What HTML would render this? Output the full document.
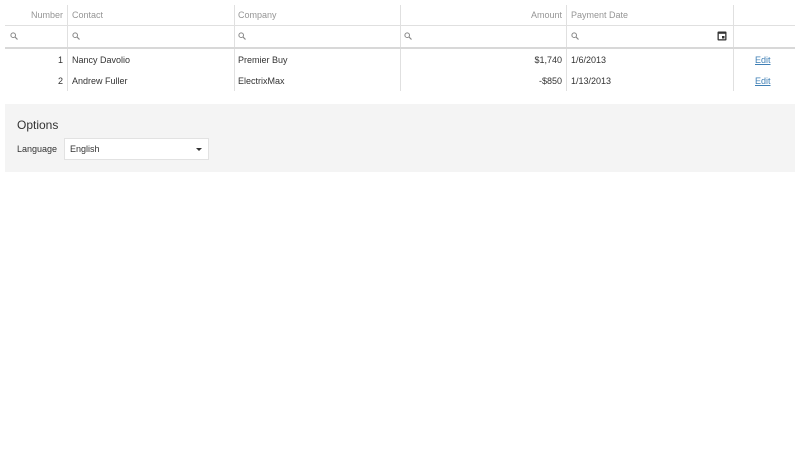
<!DOCTYPE html>
<html><head><style>
body{margin:0;width:800px;height:450px;background:#fff;font-family:"Liberation Sans",sans-serif;font-size:9px;color:#333;position:relative;overflow:hidden}
.a{position:absolute;white-space:nowrap}
.v{position:absolute;width:1px;background:#e0e0e0}
.h{position:absolute;height:1px;background:#e0e0e0;left:5px;width:790px}
.hd{color:#959595}
.r{text-align:right}
svg{position:absolute}
</style></head><body>
<div class="v" style="left:67px;top:5px;height:86px"></div>
<div class="v" style="left:234px;top:5px;height:86px"></div>
<div class="v" style="left:400px;top:5px;height:86px"></div>
<div class="v" style="left:566px;top:5px;height:86px"></div>
<div class="v" style="left:733px;top:5px;height:86px"></div>
<div class="h" style="top:25px"></div>
<div class="h" style="top:47px;height:2px;background:#d8d8d8"></div>

<div class="a hd r" style="left:5px;width:58px;top:10px">Number</div>
<div class="a hd" style="left:72px;top:10px">Contact</div>
<div class="a hd" style="left:238px;top:10px">Company</div>
<div class="a hd r" style="left:400px;width:162px;top:10px">Amount</div>
<div class="a hd" style="left:571px;top:10px">Payment Date</div>

<svg style="left:10px;top:32px" width="8" height="8" viewBox="0 0 8 8"><circle cx="3.2" cy="3.2" r="2.3" fill="none" stroke="#888" stroke-width="1"/><line x1="5" y1="5" x2="7.5" y2="7.5" stroke="#888" stroke-width="1.2"/></svg>
<svg style="left:72px;top:32px" width="8" height="8" viewBox="0 0 8 8"><circle cx="3.2" cy="3.2" r="2.3" fill="none" stroke="#888" stroke-width="1"/><line x1="5" y1="5" x2="7.5" y2="7.5" stroke="#888" stroke-width="1.2"/></svg>
<svg style="left:238px;top:32px" width="8" height="8" viewBox="0 0 8 8"><circle cx="3.2" cy="3.2" r="2.3" fill="none" stroke="#888" stroke-width="1"/><line x1="5" y1="5" x2="7.5" y2="7.5" stroke="#888" stroke-width="1.2"/></svg>
<svg style="left:404px;top:32px" width="8" height="8" viewBox="0 0 8 8"><circle cx="3.2" cy="3.2" r="2.3" fill="none" stroke="#888" stroke-width="1"/><line x1="5" y1="5" x2="7.5" y2="7.5" stroke="#888" stroke-width="1.2"/></svg>
<svg style="left:571px;top:32px" width="8" height="8" viewBox="0 0 8 8"><circle cx="3.2" cy="3.2" r="2.3" fill="none" stroke="#888" stroke-width="1"/><line x1="5" y1="5" x2="7.5" y2="7.5" stroke="#888" stroke-width="1.2"/></svg>
<svg style="left:717px;top:31px" width="10" height="10" viewBox="0 0 10 10"><rect x="0.5" y="0.5" width="9" height="9" rx="1" fill="#333"/><rect x="1.8" y="2.8" width="6.4" height="5.4" fill="#fff"/><rect x="5" y="5" width="2.5" height="2.5" fill="#333"/></svg>

<div class="a r" style="left:5px;width:58px;top:55px">1</div>
<div class="a" style="left:72px;top:55px">Nancy Davolio</div>
<div class="a" style="left:238px;top:55px">Premier Buy</div>
<div class="a r" style="left:400px;width:162px;top:55px">$1,740</div>
<div class="a" style="left:571px;top:55px">1/6/2013</div>
<div class="a" style="left:755px;top:55px;color:#3f7fb5;text-decoration:underline">Edit</div>

<div class="a r" style="left:5px;width:58px;top:76px">2</div>
<div class="a" style="left:72px;top:76px">Andrew Fuller</div>
<div class="a" style="left:238px;top:76px">ElectrixMax</div>
<div class="a r" style="left:400px;width:162px;top:76px">-$850</div>
<div class="a" style="left:571px;top:76px">1/13/2013</div>
<div class="a" style="left:755px;top:76px;color:#3f7fb5;text-decoration:underline">Edit</div>

<div class="a" style="left:5px;top:104px;width:790px;height:68px;background:#f4f4f4"></div>
<div class="a" style="left:17px;top:118px;font-size:12px;color:#333">Options</div>
<div class="a" style="left:17px;top:144px">Language</div>
<div class="a" style="left:64px;top:138px;width:143px;height:20px;background:#fff;border:1px solid #e2e2e2"></div>
<div class="a" style="left:70px;top:144px">English</div>
<div class="a" style="left:196px;top:148px;width:0;height:0;border-left:3px solid transparent;border-right:3px solid transparent;border-top:3px solid #333"></div>
</body></html>
